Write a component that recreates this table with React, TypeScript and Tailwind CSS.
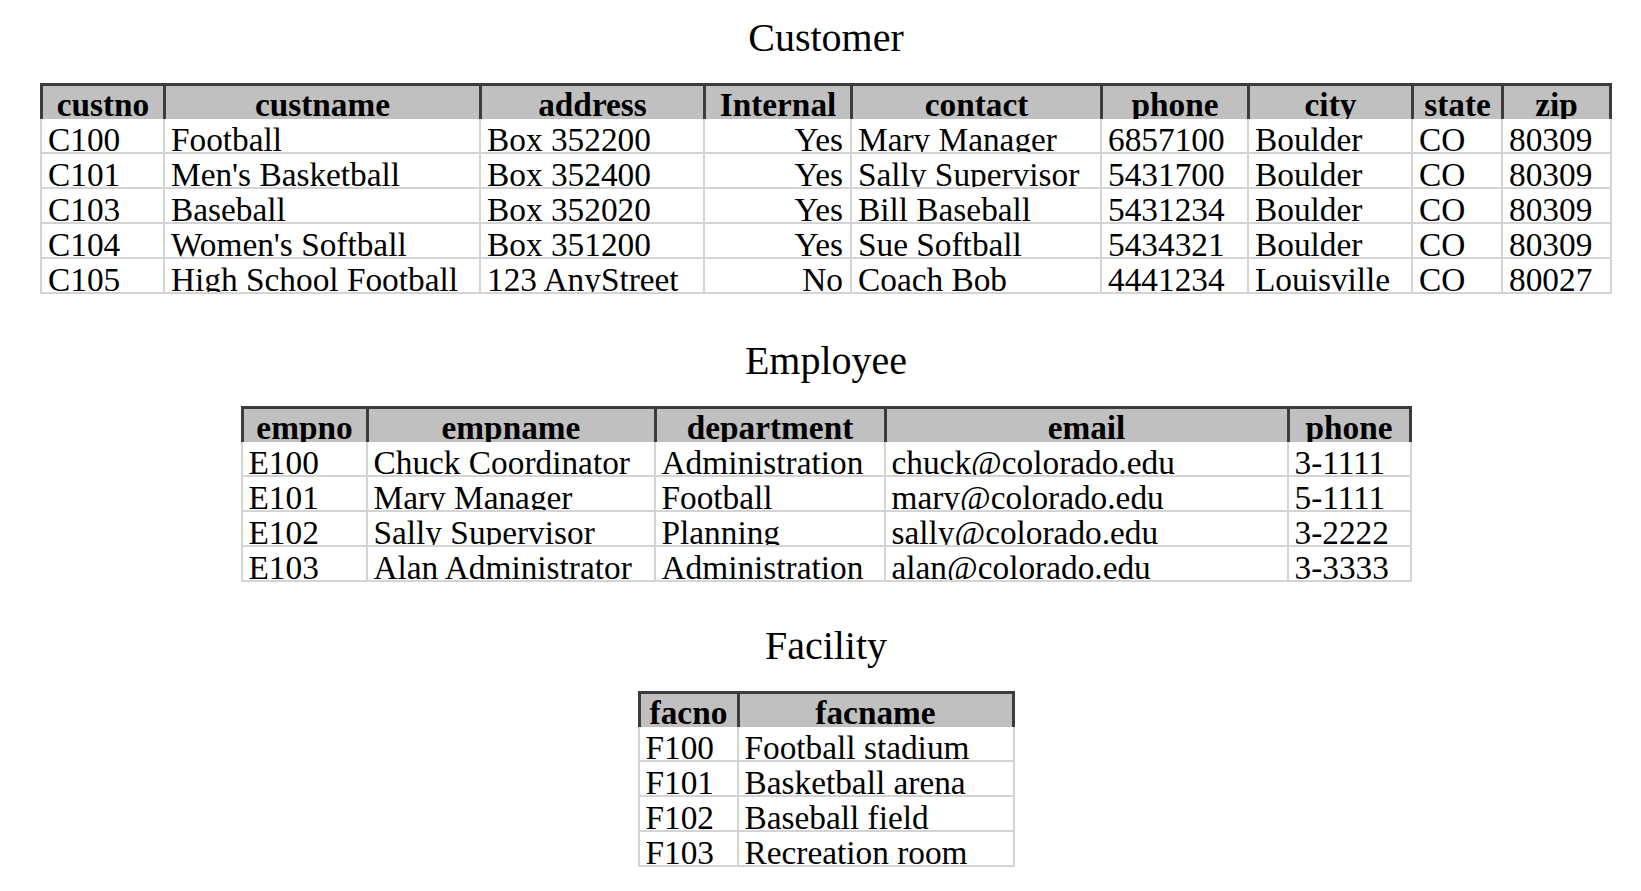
/**
 * App.tsx
 *
 * Three report tables (Customer, Employee, Facility) in the look of an
 * exported Access / Word HTML report: grey header band, clipped cells.
 */

type Column = {
  label: string;
  right?: boolean;
};

type TableProps = {
  title: string;
  gridClass: string;
  columns: Column[];
  rows: string[][];
  className?: string;
};

const customerColumns: Column[] = [
  { label: "custno" },
  { label: "custname" },
  { label: "address" },
  { label: "Internal", right: true },
  { label: "contact" },
  { label: "phone" },
  { label: "city" },
  { label: "state" },
  { label: "zip" },
];

const customerRows = [
  ["C100", "Football", "Box 352200", "Yes", "Mary Manager", "6857100", "Boulder", "CO", "80309"],
  ["C101", "Men's Basketball", "Box 352400", "Yes", "Sally Supervisor", "5431700", "Boulder", "CO", "80309"],
  ["C103", "Baseball", "Box 352020", "Yes", "Bill Baseball", "5431234", "Boulder", "CO", "80309"],
  ["C104", "Women's Softball", "Box 351200", "Yes", "Sue Softball", "5434321", "Boulder", "CO", "80309"],
  ["C105", "High School Football", "123 AnyStreet", "No", "Coach Bob", "4441234", "Louisville", "CO", "80027"],
];

const employeeColumns: Column[] = [
  { label: "empno" },
  { label: "empname" },
  { label: "department" },
  { label: "email" },
  { label: "phone" },
];

const employeeRows = [
  ["E100", "Chuck Coordinator", "Administration", "chuck@colorado.edu", "3-1111"],
  ["E101", "Mary Manager", "Football", "mary@colorado.edu", "5-1111"],
  ["E102", "Sally Supervisor", "Planning", "sally@colorado.edu", "3-2222"],
  ["E103", "Alan Administrator", "Administration", "alan@colorado.edu", "3-3333"],
];

const facilityColumns: Column[] = [{ label: "facno" }, { label: "facname" }];

const facilityRows = [
  ["F100", "Football stadium"],
  ["F101", "Basketball arena"],
  ["F102", "Baseball field"],
  ["F103", "Recreation room"],
];

function ReportTable({ title, gridClass, columns, rows, className = "" }: TableProps) {
  const last = columns.length - 1;

  return (
    <section className={`flex flex-col items-center ${className}`}>
      <h2 className="h-[40px] text-[40px] leading-[40px] font-normal text-black">{title}</h2>
      <div className={`mt-[25px] grid ${gridClass}`}>
        {/* Header band */}
        {columns.map((c, i) => (
          <div
            key={c.label}
            className={`h-[36px] overflow-hidden whitespace-nowrap border-t-[3px] border-l-[3px] border-[#3c3c3c] bg-[#c0c0c0] px-[4px] text-center text-[33.33px] leading-[38px] font-bold text-black ${
              i === last ? "border-r-[3px]" : ""
            }`}
          >
            {c.label}
          </div>
        ))}
        {/* Body rows: descenders get clipped by the row line, as in the export */}
        {rows.map((row, r) =>
          row.map((cell, i) => (
            <div
              key={`${r}-${i}`}
              className={`h-[35px] overflow-hidden whitespace-nowrap border-l-2 border-b-2 border-[#d4d4d4] bg-white text-[33.33px] leading-[41px] text-black ${
                columns[i].right ? "pr-[7px] text-right" : "pl-[6px] text-left"
              } ${i === last ? "border-r-2" : ""}`}
            >
              {cell}
            </div>
          ))
        )}
      </div>
    </section>
  );
}

export default function App() {
  return (
    <div className="min-h-[891px] bg-white pl-[11px] pt-[18px] font-[family-name:Liberation_Serif,Times_New_Roman,serif]">
      <div className="flex flex-col items-center">
        <ReportTable
          title="Customer"
          gridClass="grid-cols-[123px_316px_224px_147px_250px_147px_164px_90px_111px]"
          columns={customerColumns}
          rows={customerRows}
        />
        <ReportTable
          title="Employee"
          className="mt-[47px]"
          gridClass="grid-cols-[125px_288px_230px_403px_125px]"
          columns={employeeColumns}
          rows={employeeRows}
        />
        <ReportTable
          title="Facility"
          className="mt-[44px]"
          gridClass="grid-cols-[99px_278px]"
          columns={facilityColumns}
          rows={facilityRows}
        />
      </div>
    </div>
  );
}
